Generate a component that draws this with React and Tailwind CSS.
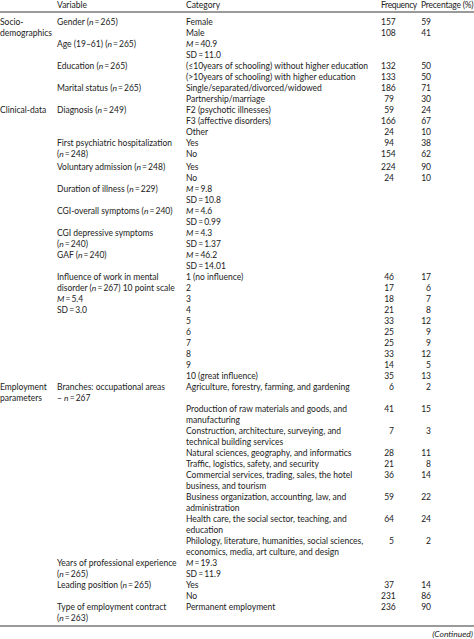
const N = ({ v }) => (
  <>
    (<i>n</i>&#8201;=&#8201;{v})
  </>
)

const M = ({ v }) => (
  <>
    <i>M</i>&#8201;=&#8201;{v}
  </>
)

const SD = ({ v }) => <>SD&#8201;=&#8201;{v}</>

const rows = [
  {
    group: ['Socio-', 'demographics'],
    variable: [<>Gender <N v="265" /></>],
    lines: [
      ['Female', '157', '59'],
      ['Male', '108', '41'],
    ],
  },
  {
    variable: [<>Age (19–61) <N v="265" /></>],
    lines: [[<M v="40.9" />], [<SD v="11.0" />]],
  },
  {
    variable: [<>Education <N v="265" /></>],
    lines: [
      ['(≤10years of schooling) without higher education', '132', '50'],
      ['(>10years of schooling) with higher education', '133', '50'],
    ],
  },
  {
    variable: [<>Marital status <N v="265" /></>],
    lines: [
      ['Single/separated/divorced/widowed', '186', '71'],
      ['Partnership/marriage', '79', '30'],
    ],
  },
  {
    group: ['Clinical-data'],
    variable: [<>Diagnosis <N v="249" /></>],
    lines: [
      ['F2 (psychotic illnesses)', '59', '24'],
      ['F3 (affective disorders)', '166', '67'],
      ['Other', '24', '10'],
    ],
  },
  {
    variable: ['First psychiatric hospitalization', <N v="248" />],
    lines: [
      ['Yes', '94', '38'],
      ['No', '154', '62'],
    ],
    gap: true,
  },
  {
    variable: [<>Voluntary admission <N v="248" /></>],
    lines: [
      ['Yes', '224', '90'],
      ['No', '24', '10'],
    ],
  },
  {
    variable: [<>Duration of illness <N v="229" /></>],
    lines: [[<M v="9.8" />], [<SD v="10.8" />]],
  },
  {
    variable: [<>CGI-overall symptoms <N v="240" /></>],
    lines: [[<M v="4.6" />], [<SD v="0.99" />]],
  },
  {
    variable: ['CGI depressive symptoms', <N v="240" />],
    lines: [[<M v="4.3" />], [<SD v="1.37" />]],
  },
  {
    variable: [<>GAF <N v="240" /></>],
    lines: [[<M v="46.2" />], [<SD v="14.01" />]],
  },
  {
    variable: [
      'Influence of work in mental',
      <>disorder <N v="267" /> 10 point scale</>,
      <M v="5.4" />,
      <SD v="3.0" />,
    ],
    lines: [
      ['1 (no influence)', '46', '17'],
      ['2', '17', '6'],
      ['3', '18', '7'],
      ['4', '21', '8'],
      ['5', '33', '12'],
      ['6', '25', '9'],
      ['7', '25', '9'],
      ['8', '33', '12'],
      ['9', '14', '5'],
      ['10 (great influence)', '35', '13'],
    ],
  },
  {
    group: ['Employment', 'parameters'],
    variable: ['Branches: occupational areas', <>– <i>n</i>&#8201;=&#8201;267</>],
    lines: [
      [['Agriculture, forestry, farming, and gardening', ''], '6', '2'],
      [['Production of raw materials and goods, and', 'manufacturing'], '41', '15'],
      [['Construction, architecture, surveying, and', 'technical building services'], '7', '3'],
      ['Natural sciences, geography, and informatics', '28', '11'],
      ['Traffic, logistics, safety, and security', '21', '8'],
      [['Commercial services, trading, sales, the hotel', 'business, and tourism'], '36', '14'],
      [['Business organization, accounting, law, and', 'administration'], '59', '22'],
      [['Health care, the social sector, teaching, and', 'education'], '64', '24'],
      [['Philology, literature, humanities, social sciences,', 'economics, media, art culture, and design'], '5', '2'],
    ],
  },
  {
    variable: ['Years of professional experience', <N v="265" />],
    lines: [[<M v="19.3" />], [<SD v="11.9" />]],
  },
  {
    variable: [<>Leading position <N v="265" /></>],
    lines: [
      ['Yes', '37', '14'],
      ['No', '231', '86'],
    ],
  },
  {
    variable: ['Type of employment contract', <N v="263" />],
    lines: [['Permanent employment', '236', '90']],
  },
]

function Line({ line }) {
  const [cat, freq, pct] = line
  const catLines = Array.isArray(cat) ? cat : [cat]
  return (
    <div className="flex">
      <div className="w-[195px] shrink-0">
        {catLines.map((c, i) => (
          <div key={i} className="h-[11px] whitespace-nowrap">
            {c}
          </div>
        ))}
      </div>
      <div className="w-[40px] shrink-0">
        <div className="w-[13px] text-right">{freq}</div>
      </div>
      <div className="flex-1">
        <div className="w-[10px] text-right">{pct}</div>
      </div>
    </div>
  )
}

function Row({ row }) {
  return (
    <div className={`flex ${row.gap ? 'pb-[2px]' : ''}`}>
      <div className="w-[57px] shrink-0">
        {(row.group || []).map((g, i) => (
          <div key={i} className="h-[11px] whitespace-nowrap">
            {g}
          </div>
        ))}
      </div>
      <div className="w-[129px] shrink-0">
        {row.variable.map((v, i) => (
          <div key={i} className="h-[11px] whitespace-nowrap">
            {v}
          </div>
        ))}
      </div>
      <div className="flex-1">
        {row.lines.map((l, i) => (
          <Line key={i} line={l} />
        ))}
      </div>
    </div>
  )
}

export default function App() {
  return (
    <div
      className="w-[474px] h-[639px] bg-white text-[#222] text-[8.5px] leading-[11px] overflow-hidden"
      style={{ fontFamily: 'Lato, "Open Sans", sans-serif' }}
    >
      <div className="flex pt-0 h-[13px] border-b-2 border-[#9a9a9a]">
        <div className="w-[57px]" />
        <div className="w-[129px]">Variable</div>
        <div className="w-[195px]">Category</div>
        <div className="w-[40px] whitespace-nowrap tracking-[-0.35px]">Frequency</div>
        <div className="flex-1 whitespace-nowrap tracking-[-0.2px]">Precentage (%)</div>
      </div>
      <div className="pt-[4px] pb-[1px] border-b-2 border-[#9a9a9a]">
        {rows.map((r, i) => (
          <Row key={i} row={r} />
        ))}
      </div>
      <div className="text-right italic pt-[2px] pr-px">(Continued)</div>
    </div>
  )
}
